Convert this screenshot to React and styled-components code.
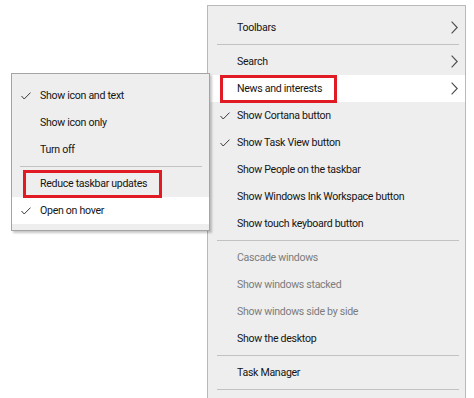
import styled, { createGlobalStyle } from "styled-components";

const GlobalStyle = createGlobalStyle`
  html, body {
    margin: 0;
    background: #ffffff;
  }
  body {
    font-family: Roboto, "Noto Sans", sans-serif;
    font-size: 10.6px;
    letter-spacing: -0.3px;
    color: #151515;
  }
`;

const mainItems = [
  { label: "Toolbars", arrow: true },
  { sep: true },
  { label: "Search", arrow: true },
  { label: "News and interests", arrow: true, hover: true, marked: true },
  { label: "Show Cortana button", checked: true },
  { label: "Show Task View button", checked: true },
  { label: "Show People on the taskbar" },
  { label: "Show Windows Ink Workspace button" },
  { label: "Show touch keyboard button" },
  { sep: true },
  { label: "Cascade windows", disabled: true },
  { label: "Show windows stacked", disabled: true },
  { label: "Show windows side by side", disabled: true },
  { label: "Show the desktop" },
  { sep: true },
  { label: "Task Manager" },
  { sep: true },
];

const subItems = [
  { label: "Show icon and text", checked: true },
  { label: "Show icon only" },
  { label: "Turn off" },
  { sep: true },
  { label: "Reduce taskbar updates", marked: true },
  { label: "Open on hover", checked: true, hover: true },
];

const Check = () => (
  <svg width="10" height="8" viewBox="0 0 10 8">
    <polyline
      points="0.5,4 3.2,7 9.5,0.6"
      fill="none"
      stroke="#3a3a3a"
      strokeWidth="1"
    />
  </svg>
);

const Chevron = () => (
  <svg width="7" height="13" viewBox="0 0 7 13">
    <polyline
      points="0.6,0.6 6.2,6.5 0.6,12.4"
      fill="none"
      stroke="#4a4a4a"
      strokeWidth="1.1"
    />
  </svg>
);

const Menu = ({ items, indent, checkAt, sepLeft, sepRight }) => (
  <>
    {items.map((it, i) =>
      it.sep ? (
        <Separator key={i} $left={sepLeft} $right={sepRight} />
      ) : (
        <Item key={i} $indent={indent} $hover={it.hover} $disabled={it.disabled}>
          <CheckSlot $at={checkAt}>{it.checked && <Check />}</CheckSlot>
          <Label $marked={it.marked}>{it.label}</Label>
          <ArrowSlot>{it.arrow && <Chevron />}</ArrowSlot>
        </Item>
      )
    )}
  </>
);

const App = () => {
  return (
    <>
      <GlobalStyle />
      <Page>
        <MainMenu>
          <Menu items={mainItems} indent={29} checkAt={12} sepLeft={9} sepRight={6} />
        </MainMenu>
        <Flyout>
          <Menu items={subItems} indent={28} checkAt={9} sepLeft={8} sepRight={7} />
        </Flyout>
      </Page>
    </>
  );
};

const Page = styled.div`
  position: relative;
  height: 398px;
  overflow: hidden;
  padding: 5px 0 0 207px;
  box-sizing: border-box;
`;

const MainMenu = styled.div`
  width: 259px;
  height: 400px;
  background: #eeeeee;
  border: 1px solid #b9b9b9;
  border-bottom: none;
  padding-top: 8px;
  box-sizing: border-box;
`;

const Flyout = styled.div`
  position: absolute;
  left: 11px;
  top: 73px;
  width: 199px;
  background: #eeeeee;
  border: 1px solid #a4a4a4;
  box-shadow: 2px 2px 2px rgba(0, 0, 0, 0.22);
  padding: 8px 0 6px;
  box-sizing: border-box;
  z-index: 1;
`;

const Item = styled.div`
  display: grid;
  grid-template-columns: ${(p) => p.$indent}px 1fr auto;
  align-items: center;
  height: 27px;
  background: ${(p) => (p.$hover ? "#ffffff" : "transparent")};
  color: ${(p) => (p.$disabled ? "#7c7c7c" : "#151515")};
  white-space: nowrap;
`;

const CheckSlot = styled.span`
  display: flex;
  align-items: center;
  padding-left: ${(p) => p.$at}px;
  height: 100%;
`;

const Label = styled.span`
  position: relative;
  justify-self: start;
  line-height: 16px;
  ${(p) =>
    p.$marked &&
    `
    &::after {
      content: "";
      position: absolute;
      left: -17px;
      right: -15px;
      top: -6px;
      bottom: -6px;
      border: 3px solid #e01b24;
    }
  `}
`;

const ArrowSlot = styled.span`
  display: flex;
  align-items: center;
  padding-right: 7px;
`;

const Separator = styled.div`
  height: 7px;
  display: flex;
  align-items: center;
  padding: 0 ${(p) => p.$right}px 0 ${(p) => p.$left}px;

  &::before {
    content: "";
    flex: 1;
    height: 1px;
    background: #c2c2c2;
  }
`;

export default App;
